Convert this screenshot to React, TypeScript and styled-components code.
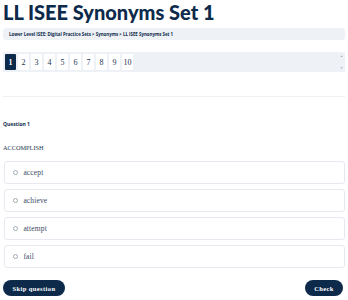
import React from "react";
import styled, { createGlobalStyle } from "styled-components";

const GlobalStyle = createGlobalStyle`
  body {
    margin: 0;
    background: #ffffff;
    font-family: "Open Sans", "Liberation Sans", sans-serif;
  }
`;

const navy = "#0d2a4b";

const Page = styled.div`
  width: 348px;
  height: 300px;
  padding: 0 3px;
  box-sizing: border-box;
  overflow: hidden;
`;

const Title = styled.h1`
  margin: 0;
  font-family: Lato, "Liberation Sans", sans-serif;
  font-weight: 900;
  font-size: 20px;
  line-height: 24px;
  color: ${navy};
  white-space: nowrap;
`;

const Breadcrumb = styled.div`
  margin-top: 4px;
  height: 12px;
  display: flex;
  align-items: center;
  padding-left: 6px;
  background: #eef1f5;
  border-radius: 3px;
  font-size: 4.4px;
  font-weight: 700;
  color: ${navy};
`;

const Pager = styled.div`
  margin-top: 12px;
  height: 20px;
  display: flex;
  align-items: center;
  gap: 2px;
  padding: 0 2px;
  background: #eef1f5;
  position: relative;
`;

const PageItem = styled.div<{ $active?: boolean }>`
  width: 11px;
  height: 16px;
  display: flex;
  align-items: center;
  justify-content: center;
  background: ${({ $active }) => ($active ? navy : "#ffffff")};
  color: ${({ $active }) => ($active ? "#ffffff" : "#26364f")};
  font-family: "Liberation Serif", serif;
  font-size: 8px;
  font-weight: ${({ $active }) => ($active ? 700 : 400)};
  border-radius: 1px;
`;

const ScrollArrows = styled.div`
  position: absolute;
  right: 2px;
  top: 2px;
  bottom: 2px;
  display: flex;
  flex-direction: column;
  justify-content: space-between;
  font-size: 3px;
  color: #9aa3ad;
`;

const Divider = styled.div`
  margin-top: 24px;
  height: 1px;
  background: #eef0f3;
`;

const QuestionLabel = styled.div`
  margin-top: 24px;
  font-size: 5px;
  font-weight: 700;
  color: ${navy};
`;

const Word = styled.div`
  margin-top: 17px;
  font-family: "Liberation Serif", serif;
  font-size: 6.3px;
  color: #26364f;
`;

const Options = styled.div`
  margin-top: 10px;
  margin-left: 1px;
  display: flex;
  flex-direction: column;
  gap: 5px;
`;

const Option = styled.div`
  height: 23px;
  box-sizing: border-box;
  border: 1px solid #e6e9f0;
  border-radius: 3px;
  display: flex;
  align-items: center;
  padding-left: 8px;
  gap: 5px;
  font-family: "Liberation Serif", serif;
  font-size: 7.5px;
  letter-spacing: 0.15px;
  color: #3d4a63;
`;

const Radio = styled.span`
  width: 3.4px;
  height: 3.4px;
  border: 0.7px solid #a3abb5;
  border-radius: 50%;
`;

const Footer = styled.div`
  margin-top: 12px;
  display: flex;
  justify-content: space-between;
  padding-right: 2px;
`;

const ActionButton = styled.button<{ $w: number }>`
  width: ${({ $w }) => $w}px;
  height: 16px;
  border: none;
  border-radius: 8px;
  background: ${navy};
  color: #ffffff;
  font-family: "Liberation Serif", serif;
  font-weight: 700;
  font-size: 6.5px;
  letter-spacing: 0.4px;
  padding: 0;
`;

const pages = [1, 2, 3, 4, 5, 6, 7, 8, 9, 10];
const answers = ["accept", "achieve", "attempt", "fail"];

export default function App() {
  return (
    <>
      <GlobalStyle />
      <Page>
        <Title>LL ISEE Synonyms Set 1</Title>
        <Breadcrumb>
          Lower Level ISEE: Digital Practice Sets &gt; Synonyms &gt; LL ISEE Synonyms Set 1
        </Breadcrumb>
        <Pager>
          {pages.map((p) => (
            <PageItem key={p} $active={p === 1}>
              {p}
            </PageItem>
          ))}
          <ScrollArrows>
            <span>▲</span>
            <span>▼</span>
          </ScrollArrows>
        </Pager>
        <Divider />
        <QuestionLabel>Question 1</QuestionLabel>
        <Word>ACCOMPLISH</Word>
        <Options>
          {answers.map((a) => (
            <Option key={a}>
              <Radio />
              {a}
            </Option>
          ))}
        </Options>
        <Footer>
          <ActionButton $w={62}>Skip question</ActionButton>
          <ActionButton $w={38}>Check</ActionButton>
        </Footer>
      </Page>
    </>
  );
}
